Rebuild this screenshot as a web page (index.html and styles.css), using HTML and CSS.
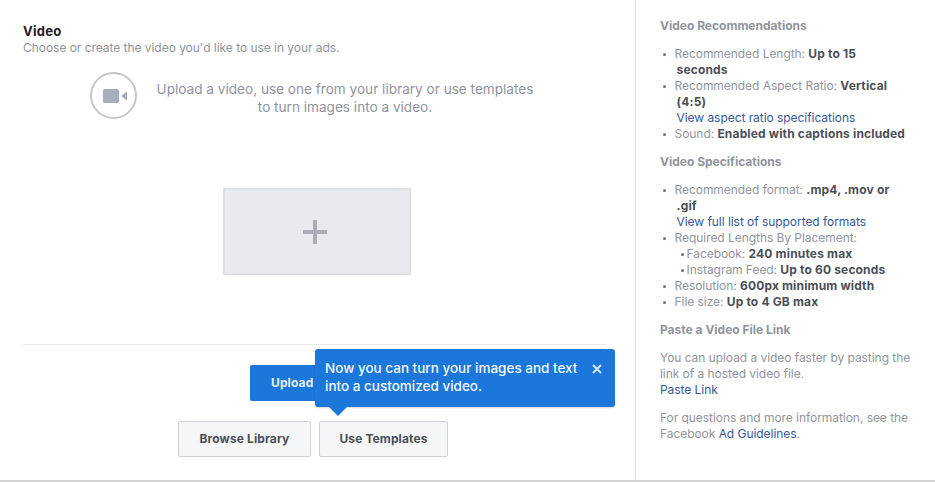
FILE: index.html
```html
<!DOCTYPE html>
<html lang="en">
<head>
<meta charset="utf-8">
<title>Video</title>
<link rel="stylesheet" href="styles.css">
</head>
<body>
<div class="page">
  <main class="editor">
    <h1 class="title">Video</h1>
    <p class="subtitle">Choose or create the video you'd like to use in your ads.</p>
    <div class="intro">
      <span class="intro-icon">
        <svg class="camera" width="24" height="14" viewBox="0 0 24 14"><rect x="0" y="0" width="16" height="14" rx="1.500" fill="#a9adbb"/><path d="M24 2.500V11.500L18 7Z" fill="#a9adbb"/></svg>
      </span>
      <p class="intro-text">Upload a video, use one from your library or use templates<br>to turn images into a video.</p>
    </div>
    <div class="dropzone">
      <svg width="24" height="24" viewBox="0 0 24 24"><path d="M10 0h4v10h10v4H14v10h-4V14H0v-4h10Z" fill="#a9adb7"/></svg>
    </div>
    <div class="actions">
      <div class="upload-row">
        <button class="btn btn-primary">Upload Video</button>
        <div class="tip">
          <p class="tip-text">Now you can turn your images and text<br>into a customized video.</p>
          <svg class="tip-close" width="10" height="10" viewBox="0 0 10 10"><path d="M1 1l8 8M9 1l-8 8" stroke="#d6e6f8" stroke-width="2"/></svg>
        </div>
      </div>
      <div class="secondary-row">
        <button class="btn btn-secondary btn-browse">Browse Library</button>
        <button class="btn btn-secondary btn-templates">Use Templates</button>
      </div>
    </div>
  </main>
  <aside class="side">
    <h2 class="side-title">Video Recommendations</h2>
    <ul class="list">
      <li>Recommended Length: <b>Up to 15 seconds</b></li>
      <li>Recommended Aspect Ratio: <b>Vertical (4:5)</b><br><a href="#">View aspect ratio specifications</a></li>
      <li>Sound: <b>Enabled with captions included</b></li>
    </ul>
    <h2 class="side-title">Video Specifications</h2>
    <ul class="list">
      <li>Recommended format: <b>.mp4, .mov or .gif</b><br><a href="#">View full list of supported formats</a></li>
      <li>Required Lengths By Placement:
        <ul class="sublist">
          <li>Facebook: <b>240 minutes max</b></li>
          <li>Instagram Feed: <b>Up to 60 seconds</b></li>
        </ul>
      </li>
      <li>Resolution: <b>600px minimum width</b></li>
      <li>File size: <b>Up to 4 GB max</b></li>
    </ul>
    <h2 class="side-title">Paste a Video File Link</h2>
    <p class="para">You can upload a video faster by pasting the link of a hosted video file.<br><a href="#">Paste Link</a></p>
    <p class="para">For questions and more information, see the Facebook <a href="#">Ad Guidelines</a>.</p>
  </aside>
</div>
</body>
</html>
```
FILE: styles.css
```css
* { box-sizing: border-box; }
html, body { margin: 0; padding: 0; background: #fff; }
body { font-family: Inter, "Liberation Sans", sans-serif; overflow: hidden; }
.page { display: flex; width: 935px; height: 482px; border-bottom: 2px solid #d4d5d8; }
.editor { width: 636px; padding: 24px 28px 0 23px; border-right: 1px solid #dddfe2; }
.title { margin: 0; font-size: 13px; line-height: 15px; font-weight: 700; letter-spacing: .3px; color: #1d2129; }
.subtitle { margin: 1px 0 0; font-size: 12px; line-height: 16px; letter-spacing: -.04px; color: #90949c; }
.intro { display: flex; align-items: flex-start; margin: 16px 0 0 67px; }
.intro-icon { flex: none; width: 47px; height: 47px; border: 2px solid #c6c7ca; border-radius: 50%; display: flex; align-items: center; justify-content: center; }
.camera { margin-left: 3px; }
.intro-text { margin: 0 0 0 8px; width: 400px; text-align: center; font-size: 13.6px; line-height: 18px; color: #8f93a0; padding-top: 8px; }
.dropzone { width: 188px; height: 87px; margin: 69px 0 0 200px; background: #e9eaed; border: 2px solid #dddfe2; display: flex; align-items: center; justify-content: center; padding: 0 4px 0 0; }
.actions { margin-top: 69px; border-top: 1px solid #e9eaed; padding-top: 20px; }
.upload-row { position: relative; height: 36px; padding-left: 227px; }
.btn { height: 36px; font-family: inherit; font-size: 12px; font-weight: 700; letter-spacing: .12px; border-radius: 2px; padding: 0 0 2px; }
.btn-primary { width: 190px; background: #1c77da; color: #e8f1fb; border: 0; text-align: left; padding-left: 21px; }
.secondary-row { display: flex; gap: 8px; margin: 20px 0 0 155px; }
.btn-secondary { background: #f5f6f7; color: #4b4f56; border: 1px solid #ced0d4; }
.btn-browse { width: 133px; }
.btn-templates { width: 129px; }
.tip { position: absolute; left: 292px; top: -16px; width: 300px; height: 58px; background: #1c77da; border-radius: 3px; display: flex; justify-content: space-between; padding: 10px 13px 0 10px; box-shadow: 0 1px 2px rgba(0,0,0,.15); }
.tip::after { content: ""; position: absolute; left: 14px; top: 58px; border: 9px solid transparent; border-top-color: #1c77da; border-bottom: 0; }
.tip-text { margin: 0; font-size: 13.5px; line-height: 18px; color: #f4f8fd; font-weight: 500; }
.tip-close { margin-top: 5px; }
.side { flex: 1; padding: 18px 20px 0 24px; font-size: 12px; line-height: 16px; letter-spacing: -.05px; color: #90949c; }
.side-title { margin: 0; font-size: 12px; line-height: 16px; font-weight: 700; letter-spacing: 0; color: #90949c; }
.list { margin: 12px 0 12px; padding: 0 7px 0 16.500px; list-style: none; }
.list li { position: relative; text-indent: -2px; }
.list li::before { content: ""; position: absolute; left: -13.500px; top: 7px; width: 3px; height: 3px; border-radius: 50%; background: #6a6e77; }
.sublist { margin: 0; padding: 0 0 0 10px; list-style: none; }
.sublist li { text-indent: 0; }
.sublist li::before { left: -6px; }
.list b { color: #4b4f56; font-weight: 700; letter-spacing: .16px; }
.list a, .para a { color: #365899; text-decoration: none; }
.para { margin: 12px 0 0; }
```
